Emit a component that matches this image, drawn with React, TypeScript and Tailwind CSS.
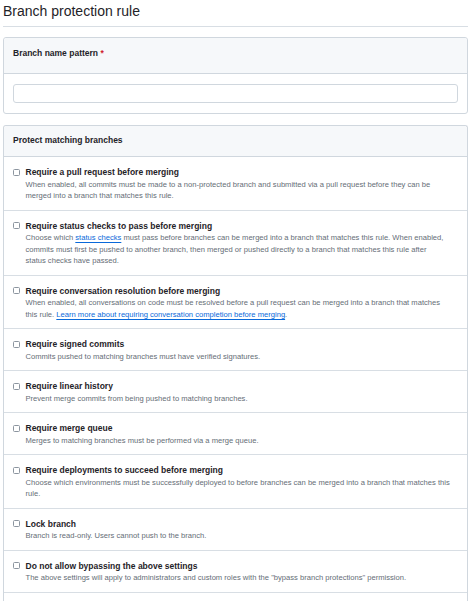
import React from 'react';

type Rule = {
  title: string;
  desc: React.ReactNode;
};

const link = 'text-[#0969da] underline underline-offset-[1.5px] decoration-[0.5px]';

const rules: Rule[] = [
  {
    title: 'Require a pull request before merging',
    desc: 'When enabled, all commits must be made to a non-protected branch and submitted via a pull request before they can be merged into a branch that matches this rule.',
  },
  {
    title: 'Require status checks to pass before merging',
    desc: (
      <>
        Choose which <a className={link}>status checks</a> must pass before branches can be merged into a branch that
        matches this rule. When enabled, commits must first be pushed to another branch, then merged or pushed
        directly to a branch that matches this rule after
        <br />
        status checks have passed.
      </>
    ),
  },
  {
    title: 'Require conversation resolution before merging',
    desc: (
      <>
        When enabled, all conversations on code must be resolved before a pull request can be merged into a branch
        that matches
        <br />
        this rule. <a className={link}>Learn more about requiring conversation completion before merging</a>.
      </>
    ),
  },
  {
    title: 'Require signed commits',
    desc: 'Commits pushed to matching branches must have verified signatures.',
  },
  {
    title: 'Require linear history',
    desc: 'Prevent merge commits from being pushed to matching branches.',
  },
  {
    title: 'Require merge queue',
    desc: 'Merges to matching branches must be performed via a merge queue.',
  },
  {
    title: 'Require deployments to succeed before merging',
    desc: 'Choose which environments must be successfully deployed to before branches can be merged into a branch that matches this rule.',
  },
  {
    title: 'Lock branch',
    desc: 'Branch is read-only. Users cannot push to the branch.',
  },
  {
    title: 'Do not allow bypassing the above settings',
    desc: 'The above settings will apply to administrators and custom roles with the "bypass branch protections" permission.',
  },
];

function RuleRow({ rule }: { rule: Rule }) {
  return (
    <label className="flex gap-[5.5px] pl-[9px] pr-[9px] pt-[9px] pb-[8px]">
      <span className="mt-[2.5px] h-[7px] w-[7px] shrink-0 rounded-[1.5px] border border-[#8c959f] bg-white" />
      <div className="min-w-0 flex-1">
        <div className="text-[8.5px] font-bold leading-[12px] text-[#1f2328]">{rule.title}</div>
        <p className="mt-[0.5px] text-[7.6px] leading-[11.5px] text-[#656d76]">{rule.desc}</p>
      </div>
    </label>
  );
}

export default function App() {
  return (
    <div
      className="h-[601px] overflow-hidden bg-white pl-[3px] pr-[6px]"
      style={{ fontFamily: '"Liberation Sans", Arial, sans-serif' }}
    >
      <h1 className="border-b border-[#d8dee4] pt-[3px] pb-[6px] text-[14px] font-normal leading-[17px] text-[#1f2328]">
        Branch protection rule
      </h1>

      <section className="mt-[10px] rounded-[3px] border border-[#d0d7de]">
        <div className="rounded-t-[3px] border-b border-[#d0d7de] bg-[#f6f8fa] px-[9px] pt-[9px] pb-[14px] text-[8.5px] font-bold leading-[12px] text-[#1f2328]">
          Branch name pattern <span className="text-[#cf222e]">*</span>
        </div>
        <div className="px-[9px] py-[10px]">
          <input
            type="text"
            className="block h-[19px] w-full rounded-[3px] border border-[#d0d7de] bg-white px-[6px] text-[8px] outline-none"
          />
        </div>
      </section>

      <section className="mt-[11px] h-[480px] rounded-t-[3px] border border-b-0 border-[#d0d7de]">
        <div className="rounded-t-[3px] border-b border-[#d0d7de] bg-[#f6f8fa] px-[9px] pt-[8px] pb-[10px] text-[8.5px] font-bold leading-[12px] text-[#1f2328]">
          Protect matching branches
        </div>
        <div className="divide-y divide-[#d8dee4] border-b border-[#d8dee4]">
          {rules.map((r) => (
            <RuleRow key={r.title} rule={r} />
          ))}
        </div>
      </section>
    </div>
  );
}
